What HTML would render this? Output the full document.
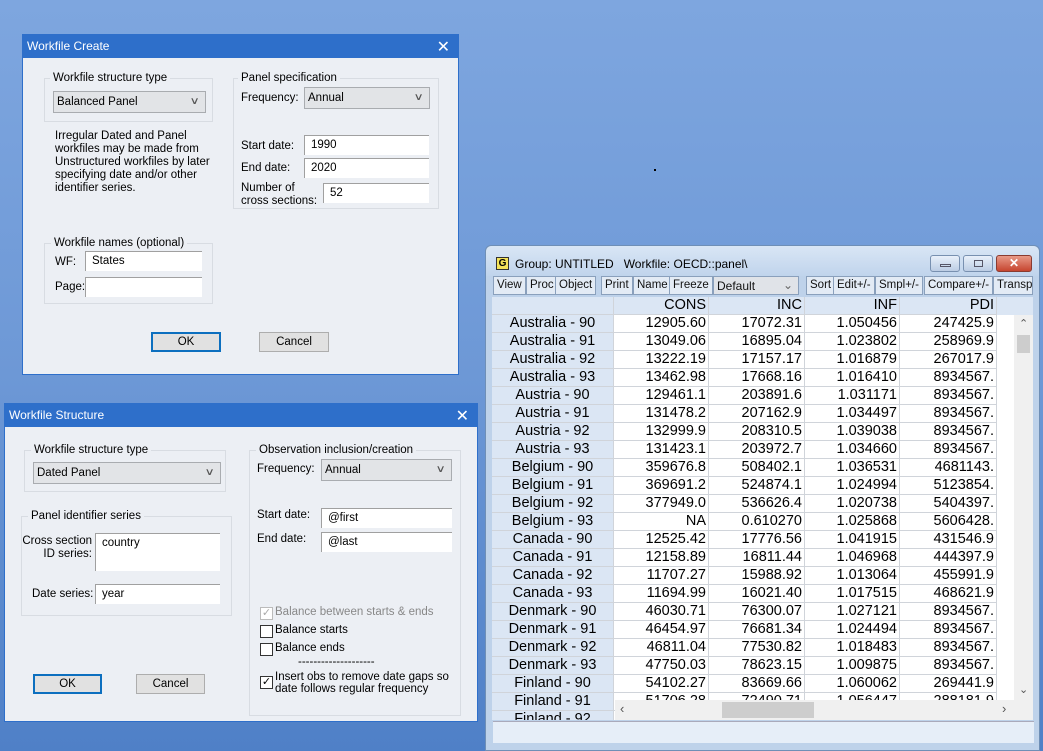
<!DOCTYPE html>
<html><head><meta charset="utf-8"><style>
*{box-sizing:border-box;margin:0;padding:0}
body{width:1043px;height:751px;overflow:hidden;position:relative;font-family:"Liberation Sans",sans-serif;font-size:11.5px;color:#000;
background:linear-gradient(180deg,#7ea6df 0%,#6d98d6 50%,#4f80c7 100%)}
.a{position:absolute;white-space:nowrap}
.dlg{position:absolute;background:#eceff4;border:1px solid #2e6fca}
.tb{position:absolute;left:0;top:0;right:0;height:23px;background:#2e6fca;color:#fff;font-size:12px;padding:4px 0 0 4px}
.x{position:absolute;right:8px;top:2px;color:#fff;font-size:16px}
.gb{position:absolute;border:1px solid #d8dce2}
.gl{position:absolute;background:#eceff4;padding:0 3px;top:-7px;left:6px;white-space:nowrap}
.cb{position:absolute;background:#e2e4e7;border:1px solid #a9acb0;height:22px;padding:4px 0 0 3px}
.cb:after{content:"\2228";position:absolute;right:7px;top:4px;color:#555;font-size:10px;transform:scaleX(1.4)}
.ed{position:absolute;background:#fff;border-top:1px solid #a0a0a0;border-left:1px solid #a0a0a0;height:20px;padding:3px 0 0 6px}
.bt{position:absolute;background:#e1e1e1;border:1px solid #adadad;height:20px;text-align:center;padding-top:3px;font-size:11.5px}
.bt.d{border:2px solid #0c6fbf;padding-top:2px}
.ck{position:absolute;width:13px;height:13px;border:1px solid #333;background:#fff}
.win{position:absolute;left:485px;top:245px;width:555px;height:506px;background:#bed2ea;border:1px solid #6f8fb6;border-radius:6px 6px 0 0}
.grid{position:absolute;left:492px;top:297px;width:541px;height:423px;background:#fff;overflow:hidden;font-size:14.5px}
.r{position:absolute;left:0;height:18px;width:541px;line-height:17px}
.r div{position:absolute;top:0;height:18px;border-right:1px solid #d0d4da;border-bottom:1px solid #d0d4da;text-align:right;padding-right:2px}
.r .l{left:0;width:122px;background:#dbe6f4;text-align:center;padding:0}
.r .c1{left:122px;width:95px}.r .c2{left:217px;width:96px}.r .c3{left:313px;width:95px}.r .c4{left:408px;width:97px}
.tbtn{position:absolute;top:276px;height:19px;border:1px solid #8aa0bc;background:#e3ebf5;font-size:11.5px;padding:2px 3px 0;color:#111;white-space:nowrap}
</style></head><body>
<div class="a" style="left:654px;top:169px;width:2px;height:2px;background:#000"></div>

<!-- Workfile Create -->
<div class="dlg" style="left:22px;top:34px;width:437px;height:341px">
<div class="tb">Workfile Create<span class="x">✕</span></div>
<div class="gb" style="left:21px;top:43px;width:169px;height:44px"><span class="gl" style="left:5px">Workfile structure type</span></div>
<div class="cb" style="left:30px;top:56px;width:153px">Balanced Panel</div>
<div class="a" style="left:32px;top:95px;line-height:13px">Irregular Dated and Panel<br>workfiles may be made from<br>Unstructured workfiles by later<br>specifying date and/or other<br>identifier series.</div>
<div class="gb" style="left:210px;top:43px;width:206px;height:131px"><span class="gl" style="left:4px">Panel specification</span></div>
<div class="a" style="left:218px;top:57px">Frequency:</div>
<div class="cb" style="left:281px;top:52px;width:126px">Annual</div>
<div class="a" style="left:218px;top:105px">Start date:</div>
<div class="ed" style="left:281px;top:100px;width:125px">1990</div>
<div class="a" style="left:218px;top:127px">End date:</div>
<div class="ed" style="left:281px;top:123px;width:125px">2020</div>
<div class="a" style="left:218px;top:147px;line-height:13px">Number of<br>cross sections:</div>
<div class="ed" style="left:300px;top:148px;width:106px">52</div>
<div class="gb" style="left:21px;top:208px;width:169px;height:61px"><span class="gl">Workfile names (optional)</span></div>
<div class="a" style="left:32px;top:221px">WF:</div>
<div class="ed" style="left:62px;top:216px;width:117px">States</div>
<div class="a" style="left:32px;top:246px">Page:</div>
<div class="ed" style="left:62px;top:242px;width:117px"></div>
<div class="bt d" style="left:128px;top:297px;width:70px">OK</div>
<div class="bt" style="left:236px;top:297px;width:70px">Cancel</div>
</div>

<!-- Workfile Structure -->
<div class="dlg" style="left:4px;top:403px;width:474px;height:319px">
<div class="tb">Workfile Structure<span class="x">✕</span></div>
<div class="gb" style="left:19px;top:46px;width:202px;height:42px"><span class="gl">Workfile structure type</span></div>
<div class="cb" style="left:28px;top:58px;width:188px">Dated Panel</div>
<div class="gb" style="left:16px;top:112px;width:211px;height:100px"><span class="gl">Panel identifier series</span></div>
<div class="a" style="left:14px;top:131px;text-align:right;width:73px;line-height:13px">Cross section<br>ID series:</div>
<div class="ed" style="left:90px;top:129px;width:125px;height:38px">country</div>
<div class="a" style="left:27px;top:184px">Date series:</div>
<div class="ed" style="left:90px;top:180px;width:125px">year</div>
<div class="gb" style="left:244px;top:46px;width:212px;height:266px"><span class="gl">Observation inclusion/creation</span></div>
<div class="a" style="left:252px;top:59px">Frequency:</div>
<div class="cb" style="left:316px;top:55px;width:131px">Annual</div>
<div class="a" style="left:252px;top:105px">Start date:</div>
<div class="ed" style="left:316px;top:104px;width:131px">@first</div>
<div class="a" style="left:252px;top:129px">End date:</div>
<div class="ed" style="left:316px;top:128px;width:131px">@last</div>
<div class="ck" style="left:255px;top:203px;border-color:#bbb;color:#aaa;font-size:11px;line-height:11px;text-align:center">✓</div>
<div class="a" style="left:270px;top:202px;color:#888">Balance between starts &amp; ends</div>
<div class="ck" style="left:255px;top:221px"></div>
<div class="a" style="left:270px;top:220px">Balance starts</div>
<div class="ck" style="left:255px;top:239px"></div>
<div class="a" style="left:270px;top:238px">Balance ends</div>
<div class="a" style="left:293px;top:252px">--------------------</div>
<div class="ck" style="left:255px;top:272px;font-size:11px;line-height:11px;text-align:center">✓</div>
<div class="a" style="left:270px;top:267px;line-height:12px">Insert obs to remove date gaps so<br>date follows regular frequency</div>
<div class="bt d" style="left:28px;top:270px;width:69px">OK</div>
<div class="bt" style="left:131px;top:270px;width:69px">Cancel</div>
</div>

<!-- Data window -->
<div class="win">
<div class="a" style="left:0;top:0;right:0;height:30px;border-radius:6px 6px 0 0;background:linear-gradient(#d9e6f5,#c0d4ec)"></div>
<div class="a" style="left:10px;top:11px;width:13px;height:13px;background:#f4e35a;border:1px solid #333;font-size:10px;font-weight:bold;text-align:center;line-height:11px">G</div>
<div class="a" style="left:29px;top:11px;font-size:12px">Group: UNTITLED &nbsp; Workfile: OECD::panel\</div>
<div class="a" style="left:444px;top:9px;width:30px;height:17px;border:1px solid #7890b0;border-radius:3px;background:linear-gradient(#e8f0fa,#bccde4)"><div class="a" style="left:9px;top:8px;width:11px;height:3px;border:1px solid #556"></div></div>
<div class="a" style="left:477px;top:9px;width:30px;height:17px;border:1px solid #7890b0;border-radius:3px;background:linear-gradient(#e8f0fa,#bccde4)"><div class="a" style="left:10px;top:4px;width:9px;height:7px;border:1px solid #556"></div></div>
<div class="a" style="left:510px;top:9px;width:36px;height:17px;border:1px solid #8a3b30;border-radius:3px;background:linear-gradient(#e89a88,#c6452f);color:#fff;text-align:center;font-weight:bold;font-size:12px;line-height:15px">✕</div>
<div class="a" style="left:7px;top:475px;width:541px;height:22px;background:#e6eef8;border-top:1px solid #aab"></div>
</div>
<div class="tbtn" style="left:493px">View</div>
<div class="tbtn" style="left:526px">Proc</div>
<div class="tbtn" style="left:555px">Object</div>
<div class="tbtn" style="left:601px">Print</div>
<div class="tbtn" style="left:633px">Name</div>
<div class="tbtn" style="left:669px">Freeze</div>
<div class="tbtn" style="left:713px;width:86px;background:#e0e3e8;font-size:12px">Default<span style="position:absolute;right:5px;top:1px;color:#666">⌄</span></div>
<div class="tbtn" style="left:806px">Sort</div>
<div class="tbtn" style="left:833px">Edit+/-</div>
<div class="tbtn" style="left:875px">Smpl+/-</div>
<div class="tbtn" style="left:924px">Compare+/-</div>
<div class="tbtn" style="left:993px;width:40px">Transp</div>

<div class="grid">
<div class="r" style="top:0;background:#dbe6f4"><div class="l"></div><div class="c1" style="background:#dbe6f4">CONS</div><div class="c2" style="background:#dbe6f4">INC</div><div class="c3" style="background:#dbe6f4">INF</div><div class="c4" style="background:#dbe6f4">PDI</div></div>
<div class="r" style="top:18px"><div class="l">Australia - 90</div><div class="c1">12905.60</div><div class="c2">17072.31</div><div class="c3">1.050456</div><div class="c4">247425.9</div></div>
<div class="r" style="top:36px"><div class="l">Australia - 91</div><div class="c1">13049.06</div><div class="c2">16895.04</div><div class="c3">1.023802</div><div class="c4">258969.9</div></div>
<div class="r" style="top:54px"><div class="l">Australia - 92</div><div class="c1">13222.19</div><div class="c2">17157.17</div><div class="c3">1.016879</div><div class="c4">267017.9</div></div>
<div class="r" style="top:72px"><div class="l">Australia - 93</div><div class="c1">13462.98</div><div class="c2">17668.16</div><div class="c3">1.016410</div><div class="c4">8934567.</div></div>
<div class="r" style="top:90px"><div class="l">Austria - 90</div><div class="c1">129461.1</div><div class="c2">203891.6</div><div class="c3">1.031171</div><div class="c4">8934567.</div></div>
<div class="r" style="top:108px"><div class="l">Austria - 91</div><div class="c1">131478.2</div><div class="c2">207162.9</div><div class="c3">1.034497</div><div class="c4">8934567.</div></div>
<div class="r" style="top:126px"><div class="l">Austria - 92</div><div class="c1">132999.9</div><div class="c2">208310.5</div><div class="c3">1.039038</div><div class="c4">8934567.</div></div>
<div class="r" style="top:144px"><div class="l">Austria - 93</div><div class="c1">131423.1</div><div class="c2">203972.7</div><div class="c3">1.034660</div><div class="c4">8934567.</div></div>
<div class="r" style="top:162px"><div class="l">Belgium - 90</div><div class="c1">359676.8</div><div class="c2">508402.1</div><div class="c3">1.036531</div><div class="c4">4681143.</div></div>
<div class="r" style="top:180px"><div class="l">Belgium - 91</div><div class="c1">369691.2</div><div class="c2">524874.1</div><div class="c3">1.024994</div><div class="c4">5123854.</div></div>
<div class="r" style="top:198px"><div class="l">Belgium - 92</div><div class="c1">377949.0</div><div class="c2">536626.4</div><div class="c3">1.020738</div><div class="c4">5404397.</div></div>
<div class="r" style="top:216px"><div class="l">Belgium - 93</div><div class="c1">NA</div><div class="c2">0.610270</div><div class="c3">1.025868</div><div class="c4">5606428.</div></div>
<div class="r" style="top:234px"><div class="l">Canada - 90</div><div class="c1">12525.42</div><div class="c2">17776.56</div><div class="c3">1.041915</div><div class="c4">431546.9</div></div>
<div class="r" style="top:252px"><div class="l">Canada - 91</div><div class="c1">12158.89</div><div class="c2">16811.44</div><div class="c3">1.046968</div><div class="c4">444397.9</div></div>
<div class="r" style="top:270px"><div class="l">Canada - 92</div><div class="c1">11707.27</div><div class="c2">15988.92</div><div class="c3">1.013064</div><div class="c4">455991.9</div></div>
<div class="r" style="top:288px"><div class="l">Canada - 93</div><div class="c1">11694.99</div><div class="c2">16021.40</div><div class="c3">1.017515</div><div class="c4">468621.9</div></div>
<div class="r" style="top:306px"><div class="l">Denmark - 90</div><div class="c1">46030.71</div><div class="c2">76300.07</div><div class="c3">1.027121</div><div class="c4">8934567.</div></div>
<div class="r" style="top:324px"><div class="l">Denmark - 91</div><div class="c1">46454.97</div><div class="c2">76681.34</div><div class="c3">1.024494</div><div class="c4">8934567.</div></div>
<div class="r" style="top:342px"><div class="l">Denmark - 92</div><div class="c1">46811.04</div><div class="c2">77530.82</div><div class="c3">1.018483</div><div class="c4">8934567.</div></div>
<div class="r" style="top:360px"><div class="l">Denmark - 93</div><div class="c1">47750.03</div><div class="c2">78623.15</div><div class="c3">1.009875</div><div class="c4">8934567.</div></div>
<div class="r" style="top:378px"><div class="l">Finland - 90</div><div class="c1">54102.27</div><div class="c2">83669.66</div><div class="c3">1.060062</div><div class="c4">269441.9</div></div>
<div class="r" style="top:396px"><div class="l">Finland - 91</div><div class="c1">51706.28</div><div class="c2">72490.71</div><div class="c3">1.056447</div><div class="c4">288181.9</div></div>
<div class="r" style="top:414px"><div class="l">Finland - 92</div></div>
<div class="a" style="left:522px;top:18px;width:19px;height:385px;background:#f0f0f0"></div>
<div class="a" style="left:527px;top:20px;font-size:11px;color:#555">⌃</div>
<div class="a" style="left:525px;top:38px;width:13px;height:18px;background:#cdcdcd"></div>
<div class="a" style="left:527px;top:386px;font-size:11px;color:#555">⌄</div>
<div class="a" style="left:123px;top:403px;width:418px;height:20px;background:#f0f0f0"></div>
<div class="a" style="left:128px;top:404px;font-size:13px;color:#555">‹</div>
<div class="a" style="left:230px;top:405px;width:92px;height:16px;background:#cdcdcd"></div>
<div class="a" style="left:510px;top:404px;font-size:13px;color:#555">›</div>
</div>
</body></html>
